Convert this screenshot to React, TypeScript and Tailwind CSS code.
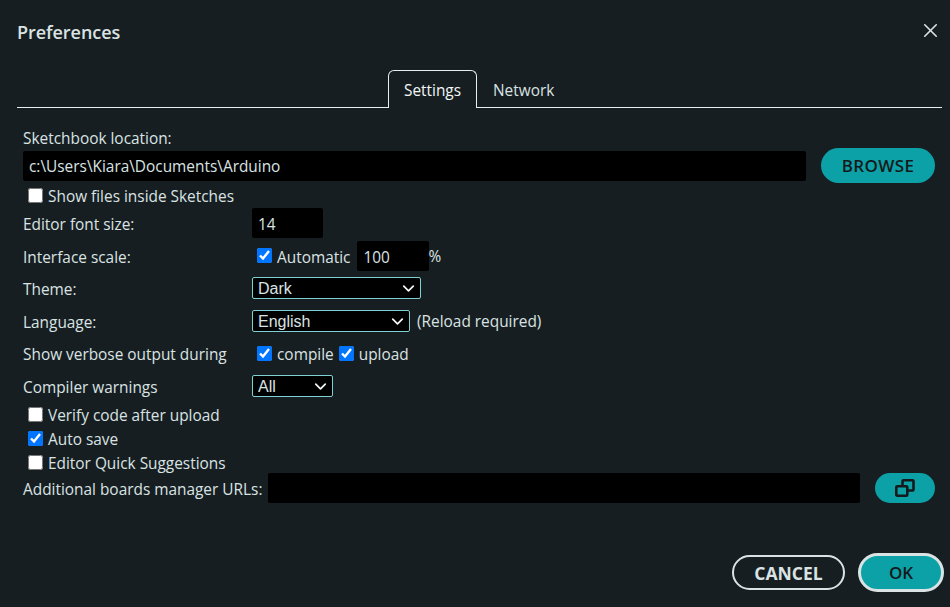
import { ChevronDown, X } from 'lucide-react';

const label = 'w-[229px] shrink-0 pt-[4px]';
const field = 'h-[30px] bg-black rounded-[2px] pl-[6px] pt-[2px] outline-none';

const Check = ({ checked = false, className = '' }: { checked?: boolean; className?: string }) => (
  <input type="checkbox" defaultChecked={checked} className={`m-0 w-[15px] h-[15px] shrink-0 -translate-y-[1px] ${className}`} />
);

const Select = ({ value, options, className }: { value: string; options: string[]; className: string }) => (
  <div className={`relative h-[22px] ${className}`}>
    <select
      defaultValue={value}
      className="appearance-none w-full h-full bg-black text-[#dae3e3] text-[16px] leading-none rounded-[2px] border border-[#7fd0d3] font-['Liberation_Sans',sans-serif] pl-[5px] pt-[1px]"
    >
      {options.map((o) => (
        <option key={o}>{o}</option>
      ))}
    </select>
    <ChevronDown size={19} strokeWidth={2.2} className="absolute right-[3px] top-[2px] pointer-events-none text-[#f2f6f6]" />
  </div>
);

const CheckRow = ({ text, checked, className }: { text: string; checked?: boolean; className: string }) => (
  <div className={`flex items-center ml-[5px] ${className}`}>
    <Check checked={checked} />
    <span className="ml-[5px] pt-[2px]">{text}</span>
  </div>
);

export default function App() {
  return (
    <div className="w-[950px] h-[607px] overflow-hidden bg-[#171e21] text-[#dae3e3] text-[15.4px] leading-[20px] font-['Open_Sans',sans-serif] flex flex-col relative">
      <button className="absolute top-[19px] right-[8px] text-[#dae3e3]">
        <X size={23} strokeWidth={1.7} />
      </button>

      <h1 className="ml-[17px] mt-[20px] h-[24px] text-[18px] leading-[24px] font-semibold tracking-[-0.05px]">Preferences</h1>

      <div className="ml-[17px] w-[925px] mt-[26px] h-[38px] flex border-b border-[#e8eeee] pl-[371px]">
        <div className="w-[89px] h-[38px] pt-[2px] border border-b-0 border-[#e8eeee] rounded-t-[6px] bg-[#171e21] flex items-center justify-center text-[#f2f6f6]">
          Settings
        </div>
        <div className="ml-[16px] h-[39px] pt-[2px] flex items-center">Network</div>
      </div>

      <div className="pl-[23px] flex flex-col">
        <div className="mt-[21px] h-[19px] flex items-center">Sketchbook location:</div>

        <div className="h-[35px] flex items-center">
          <input readOnly value="c:\Users\Kiara\Documents\Arduino" className={`w-[783px] ${field}`} />
          <button className="ml-[15px] w-[114px] h-[35px] rounded-full bg-[#0ca1a6] text-[#14191c] text-[17px] font-semibold tracking-[0.4px]">
            BROWSE
          </button>
        </div>

        <CheckRow text="Show files inside Sketches" className="mt-[3px] h-[20px]" />

        <div className="mt-[2px] h-[30px] flex items-center">
          <div className={label}>Editor font size:</div>
          <input readOnly value="14" className={`w-[71px] ${field}`} />
        </div>

        <div className="mt-[3px] h-[30px] flex items-center">
          <div className={label}>Interface scale:</div>
          <Check checked className="ml-[5px]" />
          <span className="ml-[5px] pt-[4px]">Automatic</span>
          <input readOnly value="100" className={`ml-[7px] w-[72px] ${field}`} />
          <span className="pt-[2px] -ml-[1px]">%</span>
        </div>

        <div className="mt-[6px] h-[22px] flex items-center">
          <div className={label}>Theme:</div>
          <Select value="Dark" options={['Dark', 'Light']} className="w-[169px]" />
        </div>

        <div className="mt-[11px] h-[22px] flex items-center">
          <div className={label}>Language:</div>
          <Select value="English" options={['English']} className="w-[158px]" />
          <span className="ml-[7px] pt-[2px]">(Reload required)</span>
        </div>

        <div className="mt-[12px] h-[20px] flex items-center">
          <div className="w-[229px] shrink-0 pt-[2px]">Show verbose output during</div>
          <Check checked className="ml-[5px]" />
          <span className="ml-[5px] pt-[2px]">compile</span>
          <Check checked className="ml-[5px]" />
          <span className="ml-[5px] pt-[2px]">upload</span>
        </div>

        <div className="mt-[11px] h-[22px] flex items-center">
          <div className={label}>Compiler warnings</div>
          <Select value="All" options={['All', 'None']} className="w-[81px]" />
        </div>

        <CheckRow text="Verify code after upload" className="mt-[8px] h-[20px]" />
        <CheckRow text="Auto save" checked className="mt-[4px] h-[20px]" />
        <CheckRow text="Editor Quick Suggestions" className="mt-[4px] h-[20px]" />

        <div className="h-[30px] flex items-center">
          <span className="pt-[4px]">Additional boards manager URLs:</span>
          <input readOnly className={`ml-auto w-[592px] ${field}`} />
          <button className="ml-[15px] mr-[15px] w-[60px] h-[30px] rounded-full bg-[#0ca1a6] flex items-center justify-center">
            <svg width="20" height="18" viewBox="0 0 20 18" fill="none" stroke="#14191c" strokeWidth="2.6">
              <rect x="1.3" y="7.3" width="11" height="9.4" rx="1" />
              <path d="M7.5 7V2.3a1 1 0 0 1 1-1h9a1 1 0 0 1 1 1v8.2a1 1 0 0 1-1 1H12.3" />
            </svg>
          </button>
        </div>
      </div>

      <div className="mt-[50px] mr-[6px] flex justify-end items-center gap-[13px]">
        <button className="w-[113px] h-[35px] rounded-full border-2 border-[#dae3e3] text-[#dae3e3] text-[17.5px] font-bold">
          CANCEL
        </button>
        <button className="w-[86px] h-[39px] rounded-full border-[3px] border-[#dae3e3] bg-[#0ca1a6] text-[#14191c] text-[17px] font-semibold">
          OK
        </button>
      </div>
    </div>
  );
}
